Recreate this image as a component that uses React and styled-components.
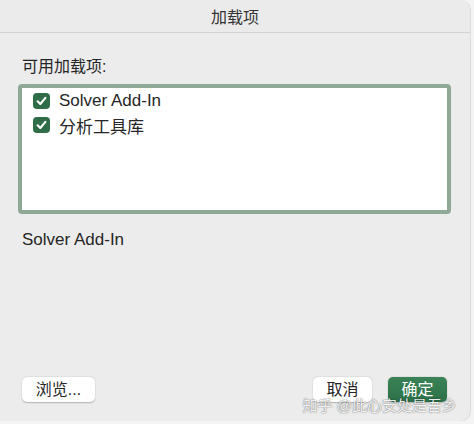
import React from 'react'
import styled, { createGlobalStyle } from 'styled-components'

const GlobalStyle = createGlobalStyle`
    html, body {
        margin: 0;
        padding: 0;
        background: #f4f4f4;
        font-family: "Liberation Sans", "Noto Sans CJK SC", sans-serif;
        color: #262626;
    }
`;

const Dialog = styled.div`
    position: relative;
    width: 470px;
    height: 421px;
    display: flex;
    flex-direction: column;
    background: #ececec;
    border-radius: 0 10px 10px 0;
    box-shadow: 1px 0 0 #dcdcdc, 0 1px 0 #dcdcdc;
    overflow: hidden;
`;

const TitleBar = styled.div`
    height: 32px;
    flex: none;
    display: flex;
    align-items: center;
    justify-content: center;
    border-bottom: 1px solid #d3d3d3;
    background: #ebebeb;
    font-size: 16px;
    color: #333;
`;

const Body = styled.div`
    flex: 1;
    display: flex;
    flex-direction: column;
    padding: 24px 19px 19px 18px;
`;

const Label = styled.div`
    font-size: 16px;
    line-height: 20px;
    padding-left: 4px;
`;

const ListBox = styled.div`
    margin-top: 7px;
    width: 433px;
    height: 130px;
    box-sizing: border-box;
    border: 4px solid #8fa996;
    border-radius: 4px;
    background: #fff;
    padding: 1px 0 0 11px;
`;

const Row = styled.div`
    height: 24px;
    display: flex;
    align-items: center;
    font-size: 17px;
`;

const Check = styled.span`
    width: 17px;
    height: 16px;
    margin-right: 9px;
    border-radius: 4px;
    background: #2f6d48;
    display: flex;
    align-items: center;
    justify-content: center;
`;

const Description = styled.div`
    margin-top: 16px;
    padding-left: 4px;
    font-size: 17px;
    line-height: 20px;
`;

const Footer = styled.div`
    margin-top: auto;
    display: flex;
    align-items: center;
    padding: 0 4px;
`;

const Button = styled.button`
    height: 25px;
    min-width: ${(props) => props.width}px;
    padding: 0 10px;
    border: none;
    border-radius: 5px;
    font-family: inherit;
    font-size: 16px;
    line-height: 25px;
    color: ${(props) => (props.primary ? '#fff' : '#262626')};
    background: ${(props) => (props.primary ? 'linear-gradient(#3a8356, #2d7049)' : '#fff')};
    box-shadow: 0 0.5px 1.5px rgba(0, 0, 0, 0.25);
    margin-left: ${(props) => props.gap || 0}px;
`;

const Spacer = styled.div`
    flex: 1;
`;

const Watermark = styled.div`
    position: absolute;
    right: 13px;
    bottom: 6px;
    font-size: 15px;
    color: rgba(255, 255, 255, 0.92);
    text-shadow: 0 0 1px rgba(0, 0, 0, 0.5), 0 0 2px rgba(0, 0, 0, 0.3);
    pointer-events: none;
`;

const CheckMark = () => (
    <svg width="11" height="10" viewBox="0 0 11 10">
        <path d="M1.6 5.3 L4.3 8 L9.4 1.8" fill="none" stroke="#fff" strokeWidth="2.1" strokeLinecap="round" strokeLinejoin="round" />
    </svg>
);

const addins = ['Solver Add-In', '分析工具库'];

export default function App() {
    return (
        <>
            <GlobalStyle />
            <Dialog>
                <TitleBar>加载项</TitleBar>
                <Body>
                    <Label>可用加载项:</Label>
                    <ListBox>
                        {addins.map((name) => (
                            <Row key={name}>
                                <Check><CheckMark /></Check>
                                <span>{name}</span>
                            </Row>
                        ))}
                    </ListBox>
                    <Description>Solver Add-In</Description>
                    <Footer>
                        <Button width={73}>浏览...</Button>
                        <Spacer />
                        <Button width={59}>取消</Button>
                        <Button width={59} gap={16} primary>确定</Button>
                    </Footer>
                </Body>
                <Watermark>知乎 @此心安处是吾乡</Watermark>
            </Dialog>
        </>
    );
}
